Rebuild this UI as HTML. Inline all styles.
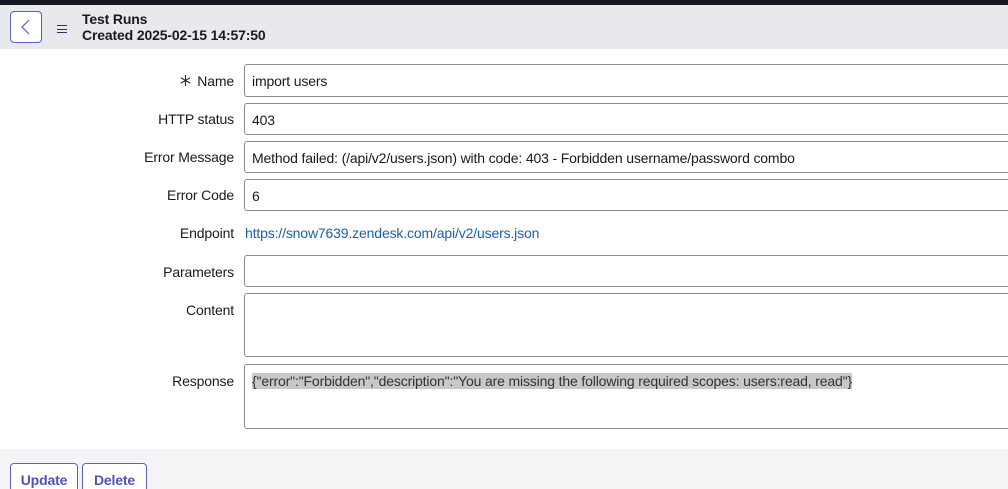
<!DOCTYPE html>
<html><head><style>
*{box-sizing:border-box}
html,body{margin:0;width:1008px;height:489px;overflow:hidden}
body{font-family:"Liberation Sans",sans-serif;font-size:14px;color:#1a1a1a;background:#fff;position:relative;letter-spacing:-0.15px}
.top{position:absolute;left:0;top:0;width:1008px;height:5px;background:#181823}
.hdr{position:absolute;left:0;top:5px;width:1008px;height:44px;background:#e8e9ec}
.back{position:absolute;left:10px;top:6px;width:32px;height:32px;border:1px solid #5b5fc7;border-radius:4px;background:#fff}
.ham{position:absolute;left:57px;top:20px;width:10px}
.ham i{display:block;height:1px;background:#2e2f6e;margin-bottom:2.5px}
.title{position:absolute;left:82px;top:6px;font-weight:bold;font-size:14px;line-height:16px;color:#1a1a1a}
.lbl{position:absolute;right:774px;text-align:right;font-size:14px;color:#1a1a1a}
.inp{position:absolute;left:244px;width:780px;border:1px solid #8a8d91;border-radius:3px;padding:8px 7px;font-size:14px;line-height:16px;background:#fff}
.foot{position:absolute;left:0;top:449px;width:1008px;height:40px;background:#f4f4f6}
.btn{position:absolute;top:463px;height:34px;border:1px solid #5b5fc7;border-radius:4px;background:#fff;color:#4f52bd;font-weight:bold;font-size:14px;padding:8px 0 0;text-align:center}
a{color:#1f5fa8;text-decoration:none}
.sel{background:#c8c8c8}
</style></head><body>
<div class="top"></div>
<div class="hdr">
<div class="back"><svg width="30" height="30" viewBox="0 0 30 30"><path d="M18 8 L11 15 L18 22" fill="none" stroke="#5b5fc7" stroke-width="1.2"/></svg></div>
<div class="ham"><i></i><i></i><i></i></div>
<div class="title">Test Runs<br>Created 2025-02-15 14:57:50</div>
</div>
<div class="lbl" style="top:73px"><svg width="13" height="13" viewBox="0 0 13 13" style="vertical-align:-1px;margin-right:5px"><path d="M6.5 1V12M1.8 3.8L11.2 9.2M11.2 3.8L1.8 9.2" stroke="#222" stroke-width="1.1"/></svg>Name</div>
<div class="inp" style="top:64px;height:33px">import users</div>
<div class="lbl" style="top:111px">HTTP status</div>
<div class="inp" style="top:103px;height:32px">403</div>
<div class="lbl" style="top:149px">Error Message</div>
<div class="inp" style="top:141px;height:32px">Method failed: (/api/v2/users.json) with code: 403 - Forbidden username/password combo</div>
<div class="lbl" style="top:187px">Error Code</div>
<div class="inp" style="top:179px;height:32px">6</div>
<div class="lbl" style="top:225px">Endpoint</div>
<div style="position:absolute;left:245px;top:225px"><a>https://snow7639.zendesk.com/api/v2/users.json</a></div>
<div class="lbl" style="top:264px">Parameters</div>
<div class="inp" style="top:255px;height:32px"></div>
<div class="lbl" style="top:302px">Content</div>
<div class="inp" style="top:293px;height:64px"></div>
<div class="lbl" style="top:373px">Response</div>
<div class="inp" style="top:364px;height:65px;padding-top:8px;color:#333"><span class="sel">{"error":"Forbidden","description":"You are missing the following required scopes: users:read, read"}</span></div>
<div class="foot"></div>
<div class="btn" style="left:10px;width:68px">Update</div>
<div class="btn" style="left:82px;width:65px">Delete</div>
</body></html>
